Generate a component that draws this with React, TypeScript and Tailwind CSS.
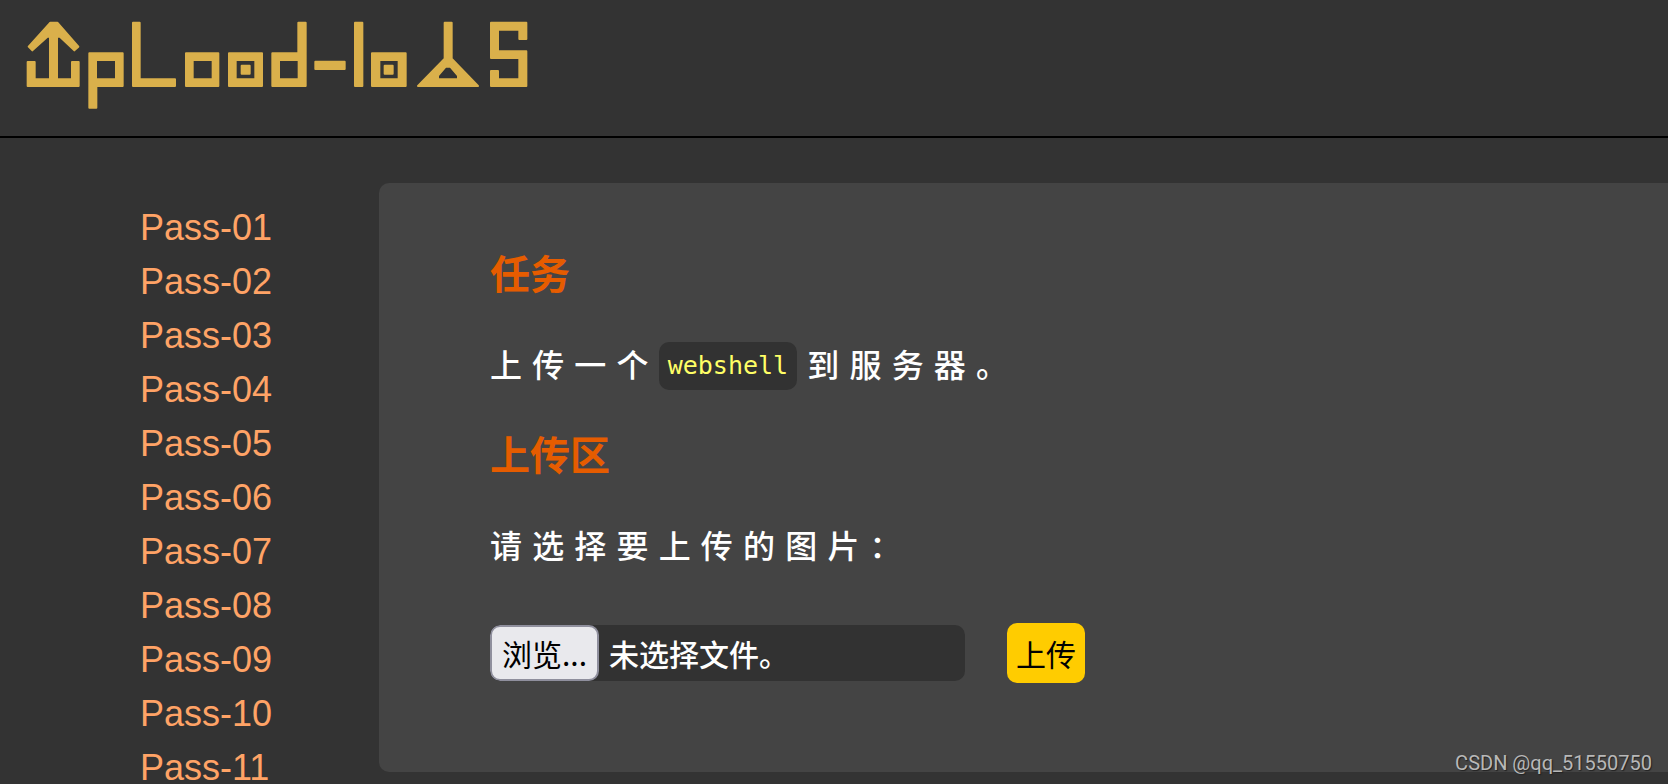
import { useRef, useState } from "react";

const passes = Array.from({ length: 11 }, (_, i) => `Pass-${String(i + 1).padStart(2, "0")}`);

const Logo = () => (
  <svg
    viewBox="78 64 1506 264"
    className="h-[88px] w-[502px]"
    fill="#dab04b"
    stroke="#dab04b"
    strokeWidth="6"
    strokeLinejoin="round"
    fillRule="evenodd"
    aria-hidden="true"
  >
    <path d="M83 187H104V239H216V187H236V259H83Z" />
    <path d="M150 72H171V242H150Z" />
    <path d="M86 141L151 69H172L235 141L223 152L180 111H142L97 152Z" />
    <path d="M268 161H368V259H289V324H268ZM288 181V239H348V181Z" />
    <path d="M399 69H419V239H525V259H399Z" />
    <path d="M558 161H655V259H558ZM578 181V239H638V181Z" />
    <path d="M687 161H786V259H687ZM707 181V239H766V181Z" />
    <path d="M725 198H749V222H725Z" />
    <path d="M817 161H895V69H917V259H817ZM837 181V239H896V181Z" />
    <path d="M946 186H1034V208H946Z" />
    <path d="M1065 69H1087V259H1065Z" />
    <path d="M1116 161H1217V259H1116ZM1138 181V239H1196V181Z" />
    <path d="M1154 198H1178V222H1154Z" />
    <path d="M1334 69H1355V177L1434 259H1254L1334 177ZM1337 201L1314 228V239H1374V228L1351 201Z" />
    <path d="M1473 69H1579V118H1558V90H1494V155H1579V259H1473V214H1494V239H1558V175H1473Z" />
  </svg>
);

const Header = () => (
  <header className="h-[138px] shrink-0 border-b-2 border-black pl-[26px] pt-[21px]">
    <a href="#home" aria-label="Upload-labs" className="inline-block">
      <Logo />
    </a>
  </header>
);

const Sidebar = () => (
  <nav className="w-[379px] shrink-0 pl-[140px] pt-[18px]">
    <ul>
      {passes.map((pass) => (
        <li key={pass}>
          <a href={`#${pass}`} className="text-[36px] leading-[54px] text-[#ffa366]">
            {pass}
          </a>
        </li>
      ))}
    </ul>
  </nav>
);

const UploadForm = () => {
  const fileRef = useRef<HTMLInputElement>(null);
  const [fileName, setFileName] = useState("未选择文件。");

  return (
    <form
      className="mt-[52px] flex items-center gap-[42px] font-['Noto_Sans_CJK_SC',sans-serif] text-[30px]"
      onSubmit={(e) => e.preventDefault()}
    >
      <div className="flex h-[56px] w-[475px] items-center gap-[10px] overflow-hidden rounded-[10px] bg-[#323232] text-white">
        <button
          type="button"
          onClick={() => fileRef.current?.click()}
          className="h-full shrink-0 rounded-[10px] border-2 border-[#8f8f9d] bg-[#e9e9ed] px-[10px] text-black"
        >
          浏览...
        </button>
        <label htmlFor="upload_file" className="truncate font-medium">
          {fileName}
        </label>
        <input
          ref={fileRef}
          id="upload_file"
          type="file"
          className="hidden"
          onChange={(e) => setFileName(e.target.files?.[0]?.name ?? "未选择文件。")}
        />
      </div>
      <button type="submit" className="h-[60px] rounded-[10px] bg-[#ffcc00] px-[9px] text-black">
        上传
      </button>
    </form>
  );
};

const App = () => {
  return (
    <div className="relative flex h-screen flex-col overflow-hidden bg-[#333333] font-['Liberation_Sans','Noto_Sans_CJK_SC',sans-serif]">
      <Header />

      <div className="flex items-start pt-[45px]">
        <Sidebar />

        {/* Task panel */}
        <main className="min-w-0 flex-1 rounded-l-[10px] bg-[#444444] pb-[89px] pl-[111px] pt-[62px]">
          <h3 className="text-[40px] font-bold leading-[60px] text-[#e65c00]">任务</h3>
          <p className="mt-[37px] font-['DejaVu_Sans','Noto_Sans_CJK_SC',sans-serif] text-[32px] font-medium leading-[48px] text-white">
            上 传 一 个{" "}
            <code className="inline-block h-[48px] rounded-[10px] bg-[#323232] px-[9px] align-top font-['DejaVu_Sans_Mono',monospace] text-[25px] text-[#ffff66]">
              webshell
            </code>{" "}
            到 服 务 器 。
          </p>
          <h3 className="mt-[36px] text-[40px] font-bold leading-[60px] text-[#e65c00]">上传区</h3>
          <p className="mt-[37px] font-['DejaVu_Sans','Noto_Sans_CJK_SC',sans-serif] text-[32px] font-medium leading-[48px] text-white">
            请 选 择 要 上 传 的 图 片 ：
          </p>
          <UploadForm />
        </main>
      </div>

      <span className="absolute bottom-[9px] right-[16px] font-['Roboto',sans-serif] text-[20px] leading-[24px] text-[#b8b8b8] [text-shadow:1px_1px_1px_#222]">
        CSDN @qq_51550750
      </span>
    </div>
  );
};

export default App;
